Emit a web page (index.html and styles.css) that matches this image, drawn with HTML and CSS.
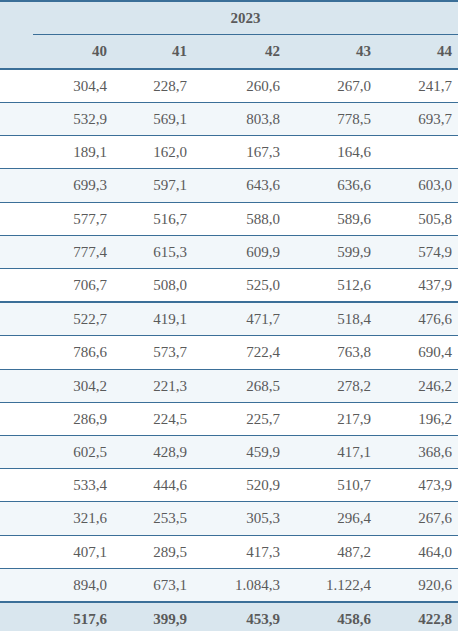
FILE: index.html
```html
<!DOCTYPE html>
<html lang="de">
<head>
<meta charset="utf-8">
<title>Tabelle 2023</title>
<link rel="stylesheet" href="styles.css">
</head>
<body>
<table class="data">
  <colgroup>
    <col class="c-stub">
    <col class="c-a">
    <col class="c-b">
    <col class="c-c">
    <col class="c-d">
    <col class="c-e">
  </colgroup>
  <thead>
    <tr class="h-year">
      <th class="stub" rowspan="2"></th>
      <th colspan="5" class="year">2023</th>
    </tr>
    <tr class="h-week">
      <th>40</th><th>41</th><th>42</th><th>43</th><th>44</th>
    </tr>
  </thead>
  <tbody>
    <tr><td></td><td>304,4</td><td>228,7</td><td>260,6</td><td>267,0</td><td>241,7</td></tr>
    <tr class="alt"><td></td><td>532,9</td><td>569,1</td><td>803,8</td><td>778,5</td><td>693,7</td></tr>
    <tr><td></td><td>189,1</td><td>162,0</td><td>167,3</td><td>164,6</td><td></td></tr>
    <tr class="alt"><td></td><td>699,3</td><td>597,1</td><td>643,6</td><td>636,6</td><td>603,0</td></tr>
    <tr><td></td><td>577,7</td><td>516,7</td><td>588,0</td><td>589,6</td><td>505,8</td></tr>
    <tr class="alt"><td></td><td>777,4</td><td>615,3</td><td>609,9</td><td>599,9</td><td>574,9</td></tr>
    <tr class="group-end"><td></td><td>706,7</td><td>508,0</td><td>525,0</td><td>512,6</td><td>437,9</td></tr>
    <tr class="alt"><td></td><td>522,7</td><td>419,1</td><td>471,7</td><td>518,4</td><td>476,6</td></tr>
    <tr><td></td><td>786,6</td><td>573,7</td><td>722,4</td><td>763,8</td><td>690,4</td></tr>
    <tr class="alt"><td></td><td>304,2</td><td>221,3</td><td>268,5</td><td>278,2</td><td>246,2</td></tr>
    <tr><td></td><td>286,9</td><td>224,5</td><td>225,7</td><td>217,9</td><td>196,2</td></tr>
    <tr class="alt"><td></td><td>602,5</td><td>428,9</td><td>459,9</td><td>417,1</td><td>368,6</td></tr>
    <tr><td></td><td>533,4</td><td>444,6</td><td>520,9</td><td>510,7</td><td>473,9</td></tr>
    <tr class="alt"><td></td><td>321,6</td><td>253,5</td><td>305,3</td><td>296,4</td><td>267,6</td></tr>
    <tr><td></td><td>407,1</td><td>289,5</td><td>417,3</td><td>487,2</td><td>464,0</td></tr>
    <tr class="alt"><td></td><td>894,0</td><td>673,1</td><td>1.084,3</td><td>1.122,4</td><td>920,6</td></tr>
  </tbody>
  <tfoot>
    <tr class="total"><td></td><td>517,6</td><td>399,9</td><td>453,9</td><td>458,6</td><td>422,8</td></tr>
  </tfoot>
</table>
</body>
</html>
```

FILE: styles.css
```css
html, body {
  margin: 0;
  padding: 0;
  background: #ffffff;
}

body,
.data,
.data th,
.data td {
  font-family: "Liberation Serif", Tinos, "Times New Roman", "DejaVu Serif", serif;
  font-size: 15px;
  color: #5a5a5a;
}

.data {
  width: 458px;
  border-collapse: collapse;
  table-layout: fixed;
  border-top: 2px solid #3b6f98;
}

.c-stub { width: 33px; }
.c-a { width: 80px; }
.c-b { width: 80px; }
.c-c { width: 93px; }
.c-d { width: 91px; }
.c-e { width: 81px; }

.data th,
.data td {
  padding: 8px 6px;
  line-height: 16.2px;
  text-align: right;
  white-space: nowrap;
}

.data thead th {
  background: #d9e6ee;
  font-weight: bold;
}

.h-year th {
  padding-top: 8px;
  padding-bottom: 7.6px;
}

.data th.year {
  text-align: center;
  border-bottom: 1px solid #3b6f98;
}

.h-week th {
  padding-top: 8.4px;
  padding-bottom: 8.4px;
}

.data thead tr.h-week th,
.data th.stub {
  border-bottom: 2px solid #3b6f98;
}

.data tbody td {
  border-bottom: 1px solid #3b6f98;
}

.data tbody tr.alt td {
  background: #f2f7fa;
}

.data tbody tr.group-end td {
  border-bottom: 2px solid #3b6f98;
}

.data tfoot td {
  background: #d9e6ee;
  font-weight: bold;
  border-top: 2px solid #3b6f98;
}
```
